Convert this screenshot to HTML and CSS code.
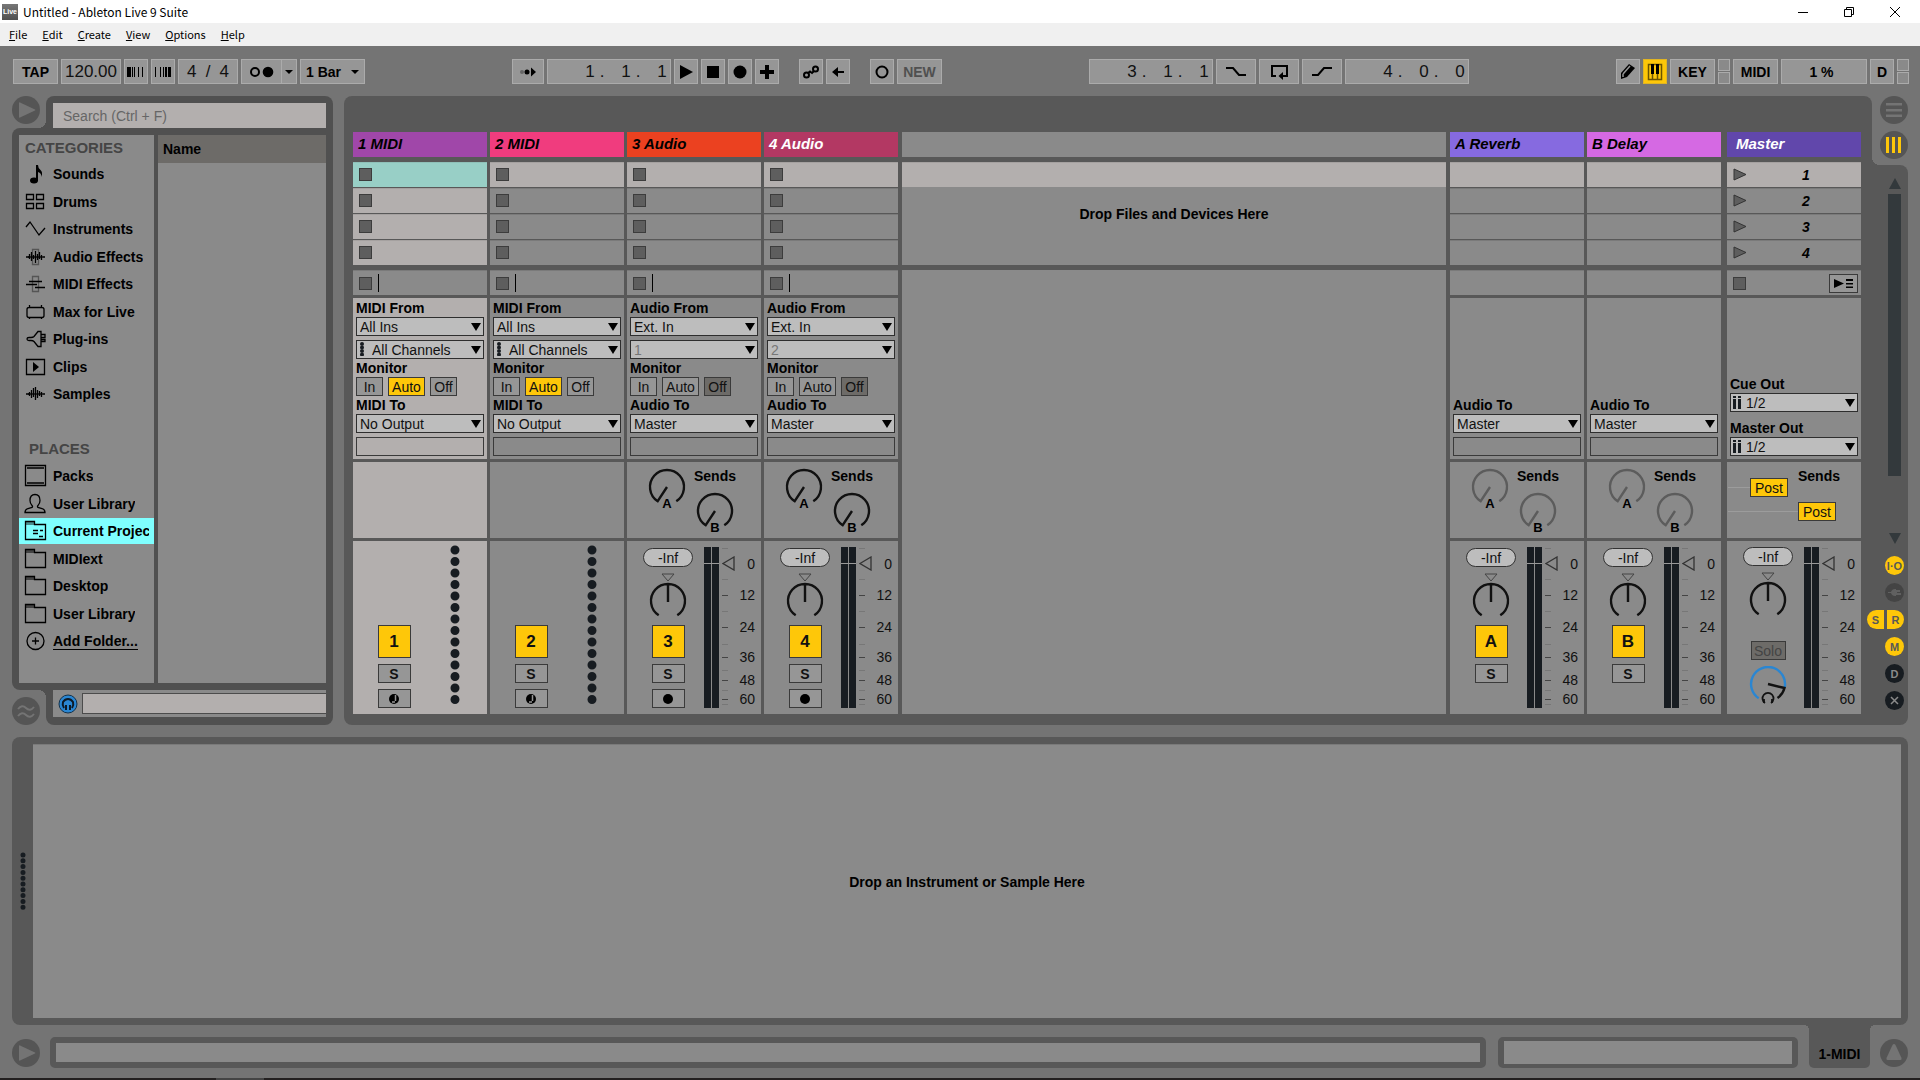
FILE: index.html
```html
<!DOCTYPE html>
<html lang="en">
<head>
    <meta charset="UTF-8">
    <meta name="viewport" content="width=device-width, initial-scale=1.0">
    <title>Untitled - Ableton Live 9 Suite</title>
    <link rel="stylesheet" href="styles.css">
</head>
<body>
    <header class="titlebar">
        <span class="app-icon">Live</span>
        <h1>Untitled - Ableton Live 9 Suite</h1>
        <div class="window-buttons">
            <button aria-label="Minimize"><svg width="12" height="12"><path d="M1 6.5h10" /></svg></button>
            <button aria-label="Restore"><svg width="12" height="12"><path d="M1.5 3.5h7v7h-7zM3.5 3.5v-2h7v7h-2" /></svg></button>
            <button aria-label="Close"><svg width="12" height="12"><path d="M1 1l10 10M11 1l-10 10" /></svg></button>
        </div>
    </header>

    <nav class="menubar">
        <a href="#"><u>F</u>ile</a>
        <a href="#"><u>E</u>dit</a>
        <a href="#"><u>C</u>reate</a>
        <a href="#"><u>V</u>iew</a>
        <a href="#"><u>O</u>ptions</a>
        <a href="#"><u>H</u>elp</a>
    </nav>

    <div class="toolbar">
        <div class="group">
            <button class="tool w45">TAP</button>
            <div class="tool readout w60">120.00</div>
            <button class="tool w24" aria-label="Nudge down"><svg width="18" height="12"><path d="M0 1h4v10H0zM5 1h1v10H5zM7 1h1v10H7zM11 1h1v10h-1zM15 1h1v10h-1z" /></svg></button>
            <button class="tool w24" aria-label="Nudge up"><svg width="18" height="12"><path d="M1 1h1v10H1zM6 1h1v10H6zM9 1h1v10H9zM11 1h2v10h-2zM14 1h3v10h-3z" /></svg></button>
            <div class="tool readout signature w60"><span>4</span><span>/</span><span>4</span></div>
            <div class="split">
                <button class="tool w41" aria-label="Metronome"><svg width="26" height="14"><circle cx="6" cy="7" r="4" fill="none" stroke="#000" stroke-width="2" /><circle cx="19" cy="7" r="5.3" /></svg></button>
                <button class="tool w15" aria-label="Metronome settings"><svg width="8" height="6"><path d="M0 1h8L4 5z" /></svg></button>
            </div>
            <button class="tool quantize w65">1 Bar<svg width="8" height="6"><path d="M0 1h8L4 5z" /></svg></button>
        </div>

        <div class="group">
            <button class="tool w32" aria-label="Follow"><svg width="18" height="12"><circle cx="3" cy="6" r="2" fill="#666" /><circle cx="8" cy="6" r="2.5" /><path d="M12 1.5l5 4.5-5 4.5z" /></svg></button>
            <div class="tool readout position"><span>1</span><span>.</span><i></i><span>1</span><span>.</span><i></i><span>1</span></div>
            <button class="tool w24" aria-label="Play"><svg width="16" height="16"><path d="M2 1l13 7-13 7z" /></svg></button>
            <button class="tool w24" aria-label="Stop"><svg width="16" height="16"><path d="M2 2h12v12H2z" /></svg></button>
            <button class="tool w24" aria-label="Record"><svg width="16" height="16"><circle cx="8" cy="8" r="6.5" /></svg></button>
            <button class="tool w24" aria-label="Overdub"><svg width="16" height="16"><path d="M6 1h4v5h5v4h-5v5H6v-5H1V6h5z" /></svg></button>
            <button class="tool w24 push" aria-label="Automation arm"><svg width="18" height="16"><g fill="none" stroke="#000" stroke-width="2"><circle cx="4.5" cy="11" r="2.5" /><circle cx="13.5" cy="5" r="2.5" /><path d="M6 9l2-1.5 2 1.500 2-2" /></g></svg></button>
            <button class="tool w24" aria-label="Re-enable automation"><svg width="14" height="12"><path d="M1 6l6-5v4h6v2H7v4z" /></svg></button>
            <button class="tool w24 push" aria-label="Session record"><svg width="16" height="16"><circle cx="8" cy="8" r="5.5" fill="none" stroke="#000" stroke-width="2" /></svg></button>
            <button class="tool w45 dim">NEW</button>
        </div>

        <div class="group">
            <div class="tool readout position"><span>3</span><span>.</span><i></i><span>1</span><span>.</span><i></i><span>1</span></div>
            <button class="tool w40" aria-label="Punch in"><svg width="22" height="12"><path class="line" d="M1 2h7l6 7h7" /></svg></button>
            <button class="tool w40" aria-label="Loop"><svg width="20" height="16"><path class="line" d="M7 12H3V2h15v10h-4" /><path d="M14 8v8l-4.5-4z" /></svg></button>
            <button class="tool w40" aria-label="Punch out"><svg width="22" height="12"><path class="line" d="M1 9h6l6-7h8" /></svg></button>
            <div class="tool readout position"><span>4</span><span>.</span><i></i><span>0</span><span>.</span><i></i><span>0</span></div>
        </div>

        <div class="group">
            <button class="tool w24" aria-label="Draw mode"><svg width="18" height="18"><path d="M2 16v-6l8-9 6 4-8 9z" /><path d="M4 11l7-8M4 11v3" stroke="#969696" fill="none" stroke-width="1.5" /></svg></button>
            <button class="tool w24 on" aria-label="Computer keyboard"><svg width="16" height="18"><path d="M1.500 1.500h13v15h-13zM5.500 11v5M10.500 11v5" fill="none" stroke="#6d5400" stroke-width="1.5" /><path d="M4 1h3v10H4zM9 1h3v10H9z" /></svg></button>
            <button class="tool w45">KEY</button>
            <div class="leds"><span></span><span></span></div>
            <button class="tool w45">MIDI</button>
            <div class="tool cpu">1 %</div>
            <button class="tool w24">D</button>
            <div class="leds"><span></span><span></span></div>
        </div>
    </div>

    <main>
        <section class="browser">
            <div class="browser-top">
                <div class="corner corner-top">
                    <button class="round" aria-label="Hide browser"><svg width="28" height="28"><path d="M7 7q0-1 1-.5l15 7q1 .5 0 1l-15 7q-1 .5-1-.5z" /></svg></button>
                </div>
                <div class="search-wrap"><input type="text" class="search" placeholder="Search (Ctrl + F)" aria-label="Search"></div>
            </div>
            <div class="browser-body">
                <div class="sidebar">
                    <h2>CATEGORIES</h2>
                    <ul class="categories">
                        <li><svg width="24" height="24"><ellipse cx="11" cy="18.5" rx="4" ry="3" /><path d="M13 3h2q0 3 2.5 5t1 7q0-4-3.500-5v9h-2z" /></svg><a href="#">Sounds</a></li>
                        <li><svg width="24" height="24"><path class="thin" d="M3.5 4.5h7v5h-7zM13.5 4.5h7v5h-7zM3.5 13.5h7v5h-7zM13.5 13.5h7v5h-7z" /></svg><a href="#">Drums</a></li>
                        <li><svg width="24" height="24"><path class="thin" d="M3 10l4-5 9 13 6-7" /></svg><a href="#">Instruments</a></li>
                        <li><svg width="24" height="24"><path class="thin faint" d="M9.5 4.5h6v15h-6z" /><path class="thin" d="M3 12h3M6.5 9v5M8.5 7v9M10.5 10v4M12.5 6v12M14.5 9v6M16.5 7v7M18.5 10v5M20 12h2" /><path class="thin" d="M5 12h15" /></svg><a href="#">Audio Effects</a></li>
                        <li><svg width="24" height="24"><path class="thin faint" d="M9.5 4.5h6v15h-6z" /><path class="thin" d="M6 9.5h13M3 12.5h11M12 15.5h10" /></svg><a href="#">MIDI Effects</a></li>
                        <li><svg width="24" height="24"><path class="thin" d="M6 7.5h13q2 0 2 2v6q0 2-2 2H6q-2 0-2-2v-6q0-2 2-2zM6.5 7V5M18.5 7V5M6.5 18v1M18.5 18v1" /></svg><a href="#">Max for Live</a></li>
                        <li><svg width="24" height="24"><path class="thin" d="M18 4.500h-3l-4 5q-1 1-3 1H6q-2 0-2 1.500t2 1.500h2q2 0 3 1l4 5h3zM18 7.500h4v3h-4M18 14.500h4v-2h-4" /></svg><a href="#">Plug-ins</a></li>
                        <li><svg width="24" height="24"><path class="thin" d="M3.5 4.5h18v15h-18z" /><path d="M10 7l6 5-6 5z" /></svg><a href="#">Clips</a></li>
                        <li><svg width="24" height="24"><path class="thin" d="M3 12h3M6.5 10v4M8.5 8v8M10.5 6v9M12.5 5v13M14.5 8v8M16.5 9v5M18.5 10v5M20 12h2" /><path class="thin" d="M5 12h15" /></svg><a href="#">Samples</a></li>
                    </ul>
                    <h2 class="places-title">PLACES</h2>
                    <ul class="places">
                        <li><svg width="24" height="24"><path class="thin" d="M2.5 1.5h20v20h-20zM4 4h17M4 19h17" /></svg><a href="#">Packs</a></li>
                        <li><svg width="24" height="24"><path class="thin" d="M2 20.5q0-3 3-4l4-1q1-1 0-2-2-2-2-5 0-6 5-6t5 6q0 3-2 5-1 1 0 2l4 1q3 1 3 4z" /></svg><a href="#">User Library</a></li>
                        <li class="selected"><svg width="24" height="24"><path d="M3 3h8v3H3z" fill="#4a8f8f" /><path class="thin" d="M2.5 20.5v-18h9v3h11v15zM10 11.5h5M17 11.5h3M10 14.5h5M16 17.5h4" /></svg><a href="#">Current Projec</a></li>
                        <li><svg width="24" height="24"><path d="M3 3h8v3H3z" fill="#444" /><path class="thin" d="M2.5 20.5v-18h9v3h11v15z" /></svg><a href="#">MIDIext</a></li>
                        <li><svg width="24" height="24"><path d="M3 3h8v3H3z" fill="#444" /><path class="thin" d="M2.5 20.5v-18h9v3h11v15z" /></svg><a href="#">Desktop</a></li>
                        <li><svg width="24" height="24"><path d="M3 3h8v3H3z" fill="#444" /><path class="thin" d="M2.5 20.5v-18h9v3h11v15z" /></svg><a href="#">User Library</a></li>
                        <li><svg width="24" height="24"><circle class="thin" cx="12.5" cy="12" r="8.5" /><path class="thin" d="M9 12h7M12.5 8.5v7" /></svg><a href="#" class="add">Add Folder...</a></li>
                    </ul>
                </div>
                <div class="files">
                    <div class="files-head">Name</div>
                </div>
            </div>
            <div class="browser-bottom">
                <div class="corner corner-bottom">
                    <button class="round" aria-label="Groove pool"><svg width="28" height="28"><path class="wave" d="M6 12q4-5 8-1t8-1M6 19q4-5 8-1t8-1" /></svg></button>
                </div>
                <div class="preview-wrap">
                    <div class="preview">
                        <button class="cue" aria-label="Preview"><svg width="20" height="20"><circle cx="10" cy="10" r="9" fill="#2a86d2" stroke="#12324d" stroke-width="1" /><path d="M6 14q-2-3-1-6 2-3 5-3t5 3q1 3-1 6" fill="none" stroke="#0d1a26" stroke-width="2" /><path d="M7 11h2v5H7zM11 11h2v5h-2z" fill="#0d1a26" /></svg></button>
                        <div class="waveform"></div>
                    </div>
                </div>
            </div>
        </section>

        <section class="session">
            <div class="tracks" id="tracks"></div>
            <aside class="rail">
                <div class="notch">
                    <button class="round" aria-label="Arrangement view"><svg width="28" height="28"><path d="M6 7h16v2.500H6zM6 13h16v2.500H6zM6 18.500h16V21H6z" /></svg></button>
                    <button class="round" aria-label="Session view"><svg width="28" height="28"><path class="active" d="M6 6h3v16H6zM12 6h3v16h-3zM18 6h3v16h-3z" /></svg></button>
                </div>
                <div class="rail-body">
                    <svg width="12" height="11"><path d="M6 0l6 11H0z" /></svg>
                    <div class="scroll"><div class="scroll-thumb"></div></div>
                    <svg width="12" height="11"><path d="M0 0h12L6 11z" /></svg>
                    <div class="toggles">
                        <button class="pill on">I·O</button>
                        <button class="pill" aria-label="Plug-in delay"><svg width="13" height="9"><path d="M0 4h3q1-3 4-3h1v1h4v2H9v1h4v2H8v1H7Q4 8 3 5H0z" /></svg></button>
                        <div class="pair"><button class="pill on">S</button><button class="pill on">R</button></div>
                        <button class="pill on">M</button>
                        <button class="pill dark">D</button>
                        <button class="pill dark" aria-label="Crossfader"><svg width="9" height="9"><path d="M1 1l7 7M8 1L1 8" stroke="#8a8a8a" stroke-width="1.5" /></svg></button>
                    </div>
                </div>
            </aside>
        </section>
    </main>

    <section class="detail">
        <div class="handle"><svg width="6" height="58"><path d="M3 3v54" /></svg></div>
        <div class="device-area">Drop an Instrument or Sample Here</div>
    </section>

    <footer class="status">
        <button class="round" aria-label="Info view"><svg width="28" height="28"><path d="M7 7q0-1 1-.5l15 7q1 .5 0 1l-15 7q-1 .5-1-.5z" /></svg></button>
        <div class="status-text"></div>
        <div class="clip-overview"></div>
        <button class="tab">1-MIDI</button>
        <button class="round" aria-label="Hide detail view"><svg width="28" height="28"><path d="M14 5q1 0 1.500 1l6 13q.5 2-1 2h-13q-1.500 0-1-2l6-13q.5-1 1.500-1z" /></svg></button>
    </footer>
    <div class="taskbar"><span></span></div>

    <script>
        const tracks = [
            { name: '1 MIDI', label: '1', kind: 'midi', color: '#a047a9', selected: true },
            { name: '2 MIDI', label: '2', kind: 'midi', color: '#f03c7e' },
            { name: '3 Audio', label: '3', kind: 'audio', color: '#eb4120', input: '1' },
            { name: '4 Audio', label: '4', kind: 'audio', color: '#b33863', light: true, input: '2' },
            { kind: 'drop' },
            { name: 'A Reverb', label: 'A', kind: 'return', color: '#866ae0' },
            { name: 'B Delay', label: 'B', kind: 'return', color: '#d569e3' },
            { name: 'Master', kind: 'master', color: '#6147ab', light: true }
        ];

        const midiIcon = '<svg class="port" width="6" height="14"><path d="M3 2v11" stroke="#171c21" stroke-width="4" stroke-dasharray="0 3.5" stroke-linecap="round" /></svg>';
        const stereoIcon = '<svg class="port" width="8" height="14"><path d="M0 4h3v10H0zM5 4h3v10H5zM0 1h3v2H0zM5 1h3v2H5z" fill="#171c21" /></svg>';

        function chooser(text, name, icon = '', extra = '') {
            return `<div class="chooser ${icon ? 'with-icon' : ''} ${extra}">${icon}<select aria-label="${name}"><option>${text}</option></select></div>`;
        }

        function monitor(active) {
            const buttons = ['In', 'Auto', 'Off'].map(text => {
                const state = text === active ? (text === 'Off' ? 'off' : 'on') : '';
                return `<button class="key ${text.toLowerCase()}-key ${state}">${text}</button>`;
            });
            return `<div class="monitor">${buttons.join('')}</div>`;
        }

        function routing(t) {
            if (t.kind === 'master') {
                return `<h3>Cue Out</h3>${chooser('1/2', 'Cue Out', stereoIcon)}
                    <h3 class="master-out">Master Out</h3>${chooser('1/2', 'Master Out', stereoIcon)}`;
            }
            if (t.kind === 'return') {
                return `<h3>Audio To</h3>${chooser('Master', 'Audio To')}<div class="blank"></div>`;
            }
            if (t.kind === 'midi') {
                return `<h3>MIDI From</h3>${chooser('All Ins', 'MIDI From')}${chooser('All Channels', 'Channel', midiIcon, 'second')}
                    <h3>Monitor</h3>${monitor('Auto')}
                    <h3>MIDI To</h3>${chooser('No Output', 'MIDI To')}<div class="blank"></div>`;
            }
            return `<h3>Audio From</h3>${chooser('Ext. In', 'Audio From')}${chooser(t.input, 'Channel', '', 'second muted')}
                <h3>Monitor</h3>${monitor('Off')}
                <h3>Audio To</h3>${chooser('Master', 'Audio To')}<div class="blank"></div>`;
        }

        function sendKnob(letter) {
            return `<svg class="send-knob" width="40" height="42"><path d="M20 19L10.700 33.200A17 17 0 1 1 29.300 33.200" /><text x="20" y="40">${letter}</text></svg>`;
        }

        function sends(t) {
            if (t.kind === 'midi') return '';
            if (t.kind === 'master') {
                return `<span class="wire wire-a"></span><button class="key on post-a">Post</button>
                    <h3>Sends</h3>
                    <span class="wire wire-b"></span><button class="key on post-b">Post</button>`;
            }
            return `${sendKnob('A')}<div class="send-right"><h3>Sends</h3>${sendKnob('B')}</div>`;
        }

        // tick marks and dB numbers to the right of the meter
        function scale() {
            const marks = [[17, '0'], [48, '12'], [80, '24'], [110, '36'], [133, '48'], [152, '60']];
            const numbers = marks.map(([y, text]) => `<text x="33" y="${y + 5}">${text}</text>`).join('');
            return `<svg class="scale" width="34" height="164">
                <path class="minor" d="M0 1.500h6M0 32.500h6M0 64.500h6M0 97.500h6M0 123.500h6M0 143.500h6M0 157.500h6" />
                <path class="major" d="M0 48.500h6M0 80.500h6M0 110.500h6M0 133.500h6M0 152.500h6" />
                ${numbers}</svg>`;
        }

        function mixer(t) {
            const pan = '<svg class="pan" width="40" height="46"><path class="mark" d="M14 1h12l-6 7z" /><path d="M10.700 42.200A17 17 0 1 1 29.300 42.200M20 29V11" /></svg>';
            const volume = '<input class="volume" value="-Inf" aria-label="Volume" readonly>';
            const record = t.kind === 'midi'
                ? '<svg width="12" height="12"><circle cx="6" cy="6" r="5" /><path d="M7.500 2v6M4 9h3" stroke="#969696" stroke-width="1.5" /></svg>'
                : '<svg width="12" height="12"><circle cx="6" cy="6" r="5" /></svg>';
            let left = t.kind === 'midi' ? '' : volume + pan;

            if (t.kind === 'master') {
                left += `<button class="key solo">Solo</button>
                    <svg class="cue-knob" width="40" height="42"><path class="blue" d="M10.700 32.200A17 17 0 1 1 36.700 21.500" /><path d="M20 18l16.500 4a17 17 0 0 1-7 10" /><path class="phones" d="M17 37a5.500 5.500 0 1 1 6 0" /><path class="phones" d="M16 33v4M24 33v4" /></svg>`;
            } else {
                left += `<button class="key activator on">${t.label}</button><button class="key strip-key">S</button>`;
                left += t.kind === 'return' ? '<div class="no-arm"></div>' : `<button class="key strip-key" aria-label="Arm">${record}</button>`;
            }

            if (t.kind === 'midi') {
                return `<div class="strip">${left}</div><svg class="dots" width="10" height="160"><path d="M5 3v151" /></svg>`;
            }
            return `<div class="strip">${left}</div><div class="meter"><span></span><span></span></div>
                <div class="fader">${scale()}<input type="range" min="0" max="100" value="94" aria-label="Fader"></div>`;
        }

        function slots(t) {
            let html = '';
            for (let i = 1; i <= 4; i++) {
                let inner = '';
                if (t.kind === 'master') {
                    inner = `<button class="launch" aria-label="Launch scene ${i}"><svg width="14" height="13"><path d="M1 1l12 5.500L1 12z" /></svg></button><span class="scene">${i}</span>`;
                } else if (t.kind !== 'return') {
                    inner = '<button class="stop" aria-label="Stop clip"></button>';
                }
                html += `<div class="slot">${inner}</div>`;
            }
            return html;
        }

        function stopRow(t) {
            if (t.kind === 'return') return '';
            if (t.kind === 'master') {
                return `<button class="stop" aria-label="Stop all clips"></button>
                    <button class="key back" aria-label="Back to arrangement"><svg width="20" height="11"><path d="M0 1l10 4.500L0 10zM12 1h7v2h-7zM12 5h7v1.500h-7zM12 8.500h7v1.500h-7z" /></svg></button>`;
            }
            return '<button class="stop" aria-label="Stop track"></button><span class="progress"></span>';
        }

        function track(t) {
            if (t.kind === 'drop') {
                return `<div class="track drop"><div class="name"></div>
                    <div class="drop-slots"><div class="slot"></div><p>Drop Files and Devices Here</p></div>
                    <div class="drop-rest"></div></div>`;
            }
            return `<div class="track ${t.kind} ${t.selected ? 'selected' : ''}">
                <div class="name ${t.light ? 'light' : ''}" style="background:${t.color}">${t.name}</div>
                <div class="slots">${slots(t)}</div>
                <div class="stop-row">${stopRow(t)}</div>
                <div class="io">${routing(t)}</div>
                <div class="sends">${sends(t)}</div>
                <div class="mixer">${mixer(t)}</div>
            </div>`;
        }

        document.getElementById('tracks').innerHTML = tracks.map(track).join('');
    </script>
</body>
</html>
```
FILE: styles.css
```css
* {
    box-sizing: border-box;
}

body {
    display: flex;
    flex-direction: column;
    min-height: 100vh;
    margin: 0;
    background-color: #747474;
    color: #000;
    font-family: "Liberation Sans", Arial, sans-serif;
    font-size: 14px;
}

h1, h2, h3, ul, p {
    margin: 0;
    padding: 0;
}

svg {
    display: block;
    flex: none;
}

button {
    display: flex;
    align-items: center;
    justify-content: center;
    flex: none;
    padding: 0;
    border: none;
    background: none;
    color: #000;
    font: inherit;
}

a {
    color: inherit;
    text-decoration: none;
}

/* Window frame */
.titlebar {
    display: flex;
    align-items: center;
    height: 23px;
    padding: 0 2px;
    background: #fff;
}

.titlebar h1 {
    margin-left: 5px;
    font: 12px/18px "Noto Sans CJK SC", sans-serif;
}

.app-icon {
    width: 16px;
    height: 16px;
    background: linear-gradient(#777, #505050);
    color: #fff;
    font: bold 7px/16px "Liberation Sans", sans-serif;
    text-align: center;
}

.window-buttons {
    display: flex;
    margin-left: auto;
}

.window-buttons button {
    width: 46px;
    height: 20px;
}

.window-buttons path {
    fill: none;
    stroke: #000;
}

.menubar {
    display: flex;
    gap: 15px;
    height: 23px;
    padding-left: 9px;
    background: #f0f0f0;
    font: 11px/22px "Noto Sans CJK SC", sans-serif;
}

/* Control bar */
.toolbar {
    display: flex;
    justify-content: space-between;
    padding: 13px 11px 12px 13px;
}

.group {
    display: flex;
    gap: 3px;
}

.tool {
    display: flex;
    align-items: center;
    justify-content: center;
    height: 25px;
    border: 1px solid #ababab;
    background: #969696;
    font-weight: bold;
}

.tool .line {
    fill: none;
    stroke: #000;
    stroke-width: 2;
}

.w15 { width: 15px; }
.w24 { width: 24px; }
.w32 { width: 32px; }
.w40 { width: 40px; }
.w41 { width: 41px; }
.w45 { width: 45px; }
.w60 { width: 60px; }
.w65 { width: 65px; }

.readout {
    color: #111;
    font-size: 17px;
    font-weight: normal;
}

.signature {
    justify-content: space-between;
    padding: 0 8px;
}

.split {
    display: flex;
}

.split .w15 {
    border-left: none;
}

.quantize {
    justify-content: space-between;
    padding: 0 5px;
}

.position {
    justify-content: flex-end;
    width: 124px;
    padding-right: 2px;
}

.position span,
.position i {
    width: 12px;
    text-align: center;
}

.push {
    margin-left: 17px;
}

.dim {
    color: #505050;
}

.tool.on {
    border-color: #e0b423;
    background: #fec709;
}

.leds {
    display: flex;
    flex-direction: column;
    gap: 1px;
}

.leds span {
    width: 12px;
    height: 12px;
    border: 1px solid #ababab;
    background: #8a8a8a;
}

.cpu {
    width: 86px;
    padding-right: 5px;
}

/* Round view buttons */
.round {
    width: 28px;
    height: 28px;
    border-radius: 50%;
    background: #555;
}

.round path {
    fill: #747474;
}

.round .active {
    fill: #fec709;
}

.round .wave {
    fill: none;
    stroke: #747474;
    stroke-width: 2;
}

main {
    display: flex;
    gap: 11px;
    padding: 0 12px;
}

/* Browser */
.browser {
    display: flex;
    flex-direction: column;
    flex: none;
    width: 321px;
}

.browser-top,
.browser-bottom {
    display: flex;
}

.corner {
    position: relative;
    width: 34px;
}

.corner::after {
    content: "";
    position: absolute;
    right: 0;
    width: 8px;
    height: 8px;
}

.corner-top::after {
    bottom: 0;
    background: radial-gradient(circle at top left, transparent 8px, #505050 8px);
}

.corner-bottom {
    padding-top: 7px;
}

.corner-bottom::after {
    top: 0;
    background: radial-gradient(circle at bottom left, transparent 8px, #505050 8px);
}

.search-wrap {
    flex: 1;
    padding: 7px 7px 0;
    border-radius: 8px 8px 0 0;
    background: #505050;
}

.search {
    width: 100%;
    height: 25px;
    padding: 0 10px;
    border: none;
    background: #b3afae;
    font: 14px "Liberation Sans", Arial, sans-serif;
}

.search::placeholder {
    color: #666;
}

.browser-body {
    display: flex;
    flex: 1;
    gap: 4px;
    padding: 7px;
    border-radius: 8px 0 0 8px;
    background: #505050;
}

.sidebar {
    width: 135px;
    background: #8a8a8a;
}

.sidebar h2 {
    padding: 4px 0 4px 6px;
    color: #454545;
    font-size: 15px;
    line-height: 18px;
}

.sidebar .places-title {
    padding: 33px 0 5px 10px;
}

.sidebar ul {
    display: flex;
    flex-direction: column;
    justify-content: space-between;
    list-style: none;
}

.categories {
    height: 246px;
}

.places {
    height: 191px;
}

.sidebar li {
    display: flex;
    align-items: center;
    gap: 6px;
    height: 26px;
    padding: 0 5px 0 4px;
    font-weight: bold;
    white-space: nowrap;
}

.sidebar li a {
    overflow: hidden;
}

.sidebar li.selected {
    background: #7fffff;
}

.sidebar a.add {
    border-bottom: 1px solid #000;
}

.thin {
    fill: none;
    stroke: #000;
    stroke-width: 1.3;
}

.thin.faint {
    stroke: #555;
}

.files {
    flex: 1;
    background: #8a8a8a;
}

.files-head {
    padding-left: 5px;
    background: #6d6b68;
    font-weight: bold;
    line-height: 28px;
}

.preview-wrap {
    flex: 1;
    padding: 0 7px 7px;
    border-radius: 0 0 8px 8px;
    background: #505050;
}

.preview {
    display: flex;
    align-items: center;
    gap: 4px;
    height: 27px;
    padding-left: 5px;
    background: #8a8a8a;
}

.waveform {
    flex: 1;
    height: 21px;
    border: 1px solid #4c4c4c;
    border-right: none;
    background: #b3afae;
}

/* Session view */
.session {
    display: flex;
    flex: 1;
}

.tracks {
    display: grid;
    grid-template-columns: repeat(4, 134px) 1fr repeat(3, 134px);
    gap: 3px;
    flex: 1;
    padding: 36px 14px 11px 9px;
    border-radius: 8px 8px 0 8px;
    background: #585858;
}

.track {
    display: flex;
    flex-direction: column;
}

.drop {
    margin: 0 1px;
}

.master {
    margin-left: 3px;
    margin-right: -3px;
}

.name {
    height: 25px;
    margin-bottom: 5px;
    padding-left: 5px;
    background: #8a8a8a;
    font-size: 15px;
    font-style: italic;
    font-weight: bold;
    line-height: 24px;
}

.name.light {
    color: #fff;
}

.master .name {
    padding-left: 9px;
}

.slots {
    display: grid;
    gap: 1px;
    margin-bottom: 5px;
}

.slot,
.stop-row {
    display: flex;
    align-items: center;
    height: 25px;
    padding-left: 6px;
    border-top: 1px solid #7a7a7a;
    background: #8a8a8a;
}

.slot {
    padding-bottom: 1px;
}

.slot:first-child,
.selected .slot {
    border-top-color: #a5a1a0;
    background: #b3afae;
}

.selected .slot:first-child {
    border-top-color: #8fc0b8;
    background: #98cfc6;
}

.stop {
    width: 13px;
    height: 13px;
    border: 1px solid #3c3c3c;
    background: #5e5e5e;
}

.launch path {
    fill: #5e5e5e;
    stroke: #333;
}

.scene {
    width: 30px;
    margin-left: 44px;
    font-style: italic;
    font-weight: bold;
    text-align: center;
}

.progress {
    width: 1px;
    height: 18px;
    margin-left: 6px;
    background: #000;
}

.stop-row {
    margin-bottom: 3px;
}

.back {
    width: 29px;
    margin-left: auto;
    margin-right: 3px;
}

.io,
.sends,
.mixer {
    background: #8a8a8a;
}

.selected .io,
.selected .sends,
.selected .mixer {
    background: #b3afae;
}

.io {
    display: flex;
    flex-direction: column;
    justify-content: flex-end;
    height: 161px;
    margin-bottom: 3px;
    padding: 0 3px 3px;
}

.io h3,
.sends h3 {
    font-size: 14px;
    line-height: 18px;
}

.io .master-out {
    margin-top: 7px;
}

.chooser {
    position: relative;
    height: 19px;
}

.chooser.second,
.blank {
    margin-top: 4px;
}

.chooser select {
    width: 100%;
    height: 19px;
    padding: 0 18px 0 3px;
    border: 1px solid #2e2e2e;
    border-radius: 0;
    appearance: none;
    background: #bdbdbd url("data:image/svg+xml,%3Csvg xmlns='http://www.w3.org/2000/svg' width='10' height='8'%3E%3Cpath d='M0 0h10L5 8z'/%3E%3C/svg%3E") no-repeat right 2px center;
    color: #111;
    font: 14px "Liberation Sans", Arial, sans-serif;
}

.chooser.with-icon select {
    padding-left: 15px;
}

.chooser.muted select {
    color: #777;
}

.port {
    position: absolute;
    left: 3px;
    top: 2px;
}

.blank {
    height: 19px;
    border: 1px solid #3a3a3a;
}

.key {
    height: 19px;
    border: 1px solid #3a3a3a;
    background: #969696;
    color: #111;
}

.key.on {
    background: #fec709;
}

.key.off {
    background: #6d6b68;
}

.monitor {
    display: flex;
    gap: 5px;
}

.in-key,
.off-key {
    width: 27px;
}

.auto-key {
    width: 37px;
}

.sends {
    display: flex;
    gap: 4px;
    height: 76px;
    margin-bottom: 3px;
    padding: 6px 0 0 20px;
}

.send-right {
    display: flex;
    flex-direction: column;
    align-items: center;
    gap: 8px;
    width: 48px;
}

.sends h3 {
    line-height: 16px;
}

.send-knob path,
.pan path,
.cue-knob path {
    fill: none;
    stroke: #111;
    stroke-width: 2.4;
}

.return .send-knob path {
    stroke: #5c5c5c;
}

.send-knob text {
    font-size: 13px;
    font-weight: bold;
    text-anchor: middle;
}

.master .sends {
    display: grid;
    grid-template: 10px 6px 13px 5px 19px / 22px 38px 10px 38px;
    gap: 0;
    padding-left: 1px;
}

.master .sends h3 {
    grid-area: 1 / 4 / 3 / 5;
}

.post-a {
    grid-area: 2 / 2 / 4 / 3;
}

.post-b {
    grid-area: 5 / 4;
}

.wire {
    align-self: center;
    height: 1px;
    background: #9c9c9c;
}

.wire-a {
    grid-area: 2 / 1 / 4 / 2;
}

.wire-b {
    grid-area: 5 / 1 / 6 / 4;
}

.mixer {
    display: flex;
    height: 173px;
    padding: 6px 0 6px 16px;
}

.strip {
    display: flex;
    flex-direction: column;
    align-items: center;
    justify-content: flex-end;
    gap: 6px;
    width: 50px;
}

.volume {
    flex: none;
    width: 50px;
    height: 19px;
    padding: 0;
    border: 1px solid #333;
    border-radius: 10px;
    background: #bdbdbd;
    color: #111;
    font: 14px "Liberation Sans", Arial, sans-serif;
    text-align: center;
}

.pan .mark {
    stroke: #444;
    stroke-width: 1;
}

.activator {
    width: 33px;
    height: 33px;
    font-size: 17px;
    font-weight: bold;
}

.strip-key {
    width: 33px;
    font-weight: bold;
}

.no-arm {
    flex: none;
    height: 19px;
}

.solo {
    width: 35px;
    margin-top: auto;
    background: #6d6b68;
    color: #444;
}

.cue-knob .blue {
    stroke: #2a86d2;
}

.cue-knob .phones {
    stroke-width: 1.8;
}

.dots {
    margin-left: 31px;
    overflow: visible;
}

.dots path {
    stroke: #171c21;
    stroke-width: 9;
    stroke-linecap: round;
    stroke-dasharray: 0 11.5;
}

.meter {
    display: flex;
    gap: 1px;
    margin-left: 11px;
    background: linear-gradient(transparent 16px, #999 16px, #999 17px, transparent 17px);
}

.meter span {
    width: 7px;
    background: linear-gradient(#171c21 16px, #999 16px, #999 17px, #171c21 17px);
}

.fader {
    position: relative;
    margin-left: 3px;
}

.scale text {
    fill: #111;
    font-size: 14px;
    text-anchor: end;
}

.scale .minor {
    stroke: #777;
}

.scale .major {
    stroke: #444;
}

.fader input {
    position: absolute;
    left: 0;
    top: 0;
    width: 13px;
    height: 161px;
    margin: 0;
    appearance: none;
    background: none;
    writing-mode: vertical-lr;
    direction: rtl;
}

.fader input::-webkit-slider-thumb {
    width: 13px;
    height: 15px;
    appearance: none;
    background: url("data:image/svg+xml,%3Csvg xmlns='http://www.w3.org/2000/svg' width='13' height='15'%3E%3Cpath d='M1 7.5L12 1v13z' fill='%238a8a8a' stroke='%23333' stroke-width='1.3'/%3E%3C/svg%3E") no-repeat;
}

.drop .name,
.drop .slot {
    flex: none;
}

.drop-slots {
    height: 103px;
    margin-bottom: 5px;
    background: #8a8a8a;
}

.drop-slots p {
    padding-top: 19px;
    font-weight: bold;
    text-align: center;
}

.drop-rest {
    flex: 1;
    background: #8a8a8a;
}

/* Right rail */
.rail {
    display: flex;
    flex-direction: column;
    width: 36px;
}

.notch {
    position: relative;
    display: flex;
    flex-direction: column;
    align-items: flex-end;
    gap: 7px;
    height: 69px;
}

.notch::after {
    content: "";
    position: absolute;
    left: 0;
    bottom: 0;
    width: 8px;
    height: 8px;
    background: radial-gradient(circle at top right, transparent 8px, #585858 8px);
}

.rail-body {
    display: flex;
    flex-direction: column;
    align-items: center;
    flex: 1;
    padding: 13px 0 15px 9px;
    border-radius: 0 8px 8px 0;
    background: #585858;
}

.rail-body > svg {
    fill: #33393c;
}

.scroll {
    flex: 1;
    width: 13px;
    margin: 5px 0 3px;
}

.scroll-thumb {
    height: 84%;
    background: #33393c;
}

.toggles {
    display: flex;
    flex-direction: column;
    align-items: flex-end;
    gap: 8px;
    width: 19px;
    margin-top: 12px;
}

.pill {
    width: 19px;
    height: 19px;
    border-radius: 10px;
    background: #444;
    color: #585858;
    font-size: 11px;
    font-weight: bold;
}

.pill svg {
    fill: #606060;
}

.pill.on {
    background: #fec709;
}

.pill.dark {
    background: #171c21;
    color: #8a8a8a;
}

.pair {
    display: flex;
    gap: 3px;
}

.pair .pill {
    width: 17px;
}

.pair .pill:first-child {
    border-radius: 10px 0 0 10px;
}

.pair .pill:last-child {
    border-radius: 0 10px 10px 0;
}

/* Detail view */
.detail {
    display: flex;
    flex: 1;
    margin: 12px 12px 0;
    padding: 7px 7px 7px 0;
    border-radius: 8px;
    background: #585858;
}

.handle {
    display: flex;
    align-items: center;
    justify-content: center;
    width: 21px;
}

.handle path {
    stroke: #171c21;
    stroke-width: 5;
    stroke-linecap: round;
    stroke-dasharray: 0 5.8;
}

.device-area {
    display: flex;
    align-items: center;
    justify-content: center;
    flex: 1;
    border-top: 1px solid #7a7a7a;
    background: #8a8a8a;
    font-weight: bold;
}

/* Status bar */
.status {
    display: flex;
    align-items: center;
    height: 53px;
    padding: 0 12px;
}

.status-text,
.clip-overview,
.status .round {
    margin-top: 2px;
}

.status-text,
.clip-overview {
    height: 31px;
    border: 6px solid #585858;
    border-radius: 5px;
    background: #8a8a8a;
}

.status-text {
    flex: 1;
    margin-left: 10px;
}

.clip-overview {
    width: 300px;
    margin-left: 12px;
    border-width: 4px 6px;
}

.tab {
    position: relative;
    align-self: flex-start;
    width: 61px;
    height: 43px;
    margin: 0 10px 0 11px;
    padding-top: 14px;
    border-radius: 0 0 5px 5px;
    background: #585858;
    font-weight: bold;
}

.tab::before,
.tab::after {
    content: "";
    position: absolute;
    top: 0;
    width: 5px;
    height: 5px;
}

.tab::before {
    right: 100%;
    background: radial-gradient(circle at bottom left, transparent 5px, #585858 5px);
}

.tab::after {
    left: 100%;
    background: radial-gradient(circle at bottom right, transparent 5px, #585858 5px);
}

.taskbar {
    height: 2px;
    background: #232020;
}

.taskbar span {
    display: block;
    width: 48px;
    height: 2px;
    margin-left: 216px;
    background: #444;
}
```
